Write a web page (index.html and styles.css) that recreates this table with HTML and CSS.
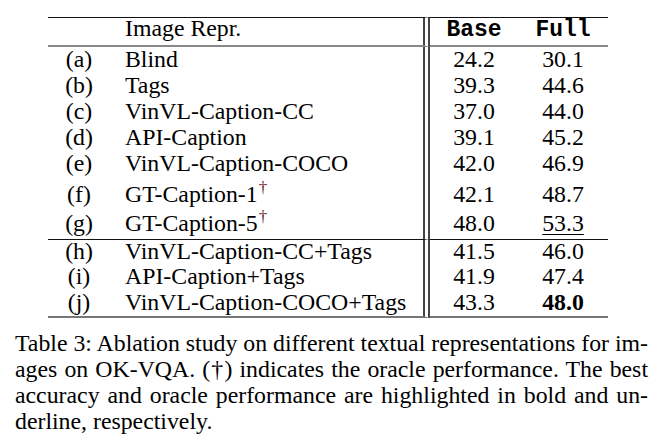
FILE: index.html
```html
<!DOCTYPE html>
<html>
<head>
<meta charset="utf-8">
<link rel="stylesheet" href="styles.css">
</head>
<body>
<div class="page">
  <table class="results">
    <colgroup>
      <col class="c-id"><col class="c-repr"><col class="c-base"><col class="c-full">
    </colgroup>
    <thead>
      <tr class="head">
        <th></th>
        <th class="repr">Image Repr.</th>
        <th class="num mono">Base</th>
        <th class="num mono">Full</th>
      </tr>
    </thead>
    <tbody>
      <tr><td class="id">(a)</td><td class="repr">Blind</td><td class="num">24.2</td><td class="num">30.1</td></tr>
      <tr><td class="id">(b)</td><td class="repr">Tags</td><td class="num">39.3</td><td class="num">44.6</td></tr>
      <tr><td class="id">(c)</td><td class="repr">VinVL-Caption-CC</td><td class="num">37.0</td><td class="num">44.0</td></tr>
      <tr><td class="id">(d)</td><td class="repr">API-Caption</td><td class="num">39.1</td><td class="num">45.2</td></tr>
      <tr><td class="id">(e)</td><td class="repr">VinVL-Caption-COCO</td><td class="num">42.0</td><td class="num">46.9</td></tr>
      <tr class="row-f"><td class="id">(f)</td><td class="repr">GT-Caption-1<sup class="dag">†</sup></td><td class="num">42.1</td><td class="num">48.7</td></tr>
      <tr class="row-g"><td class="id">(g)</td><td class="repr">GT-Caption-5<sup class="dag">†</sup></td><td class="num">48.0</td><td class="num"><span class="under">53.3</span></td></tr>
      <tr class="row-h"><td class="id">(h)</td><td class="repr">VinVL-Caption-CC+Tags</td><td class="num">41.5</td><td class="num">46.0</td></tr>
      <tr><td class="id">(i)</td><td class="repr">API-Caption+Tags</td><td class="num">41.9</td><td class="num">47.4</td></tr>
      <tr class="row-last"><td class="id">(j)</td><td class="repr">VinVL-Caption-COCO+Tags</td><td class="num">43.3</td><td class="num"><b>48.0</b></td></tr>
    </tbody>
  </table>
  <p class="caption">
    <span class="line">Table 3: Ablation study on different textual representations for im-</span>
    <span class="line">ages on OK-VQA. (†) indicates the oracle performance. The best</span>
    <span class="line">accuracy and oracle performance are highlighted in bold and un-</span>
    <span class="line last">derline, respectively.</span>
  </p>
</div>
</body>
</html>
```
FILE: styles.css
```css
html, body {
  margin: 0;
  padding: 0;
  background: #ffffff;
}
body {
  font-family: "Liberation Serif", "Times New Roman", serif;
  color: #000;
}
.page {
  padding-top: 17px;
}
.results {
  margin-left: 48px;
  width: 560px;
  border-collapse: separate;
  border-spacing: 0;
  table-layout: fixed;
  font-size: 23.8px;
}
.c-id { width: 62px; }
.c-repr { width: 320px; }
.c-base { width: 88px; }
.c-full { width: 90px; }

.results th,
.results td {
  padding: 0 0 2px 0;
  line-height: 24px;
  vertical-align: baseline;
  font-weight: normal;
  white-space: nowrap;
}
.results td.id { text-align: center; }
.results .repr {
  text-align: left;
  padding-left: 15px;
  border-right: 7px double #444;
}
.results .num { text-align: center; }
.results .mono {
  font-family: "Liberation Mono", "Courier New", monospace;
  font-weight: bold;
  font-size: 23px;
}

.head th {
  border-top: 1px solid #111;
  border-bottom: 2px solid #888;
  line-height: 20px;
  padding-bottom: 5px;
}
.row-f td {
  padding-top: 5px;
  padding-bottom: 1px;
}
.row-g td {
  padding-top: 4px;
  padding-bottom: 4px;
}
.row-h td {
  border-top: 1px solid #111;
  line-height: 22px;
}
.row-last td {
  border-bottom: 2px solid #777;
}
.dag {
  font-size: 17px;
  line-height: 0;
  vertical-align: 9px;
  color: #6b1a1a;
  margin-left: 1px;
}
.under {
  text-decoration: underline;
  text-decoration-thickness: 1px;
  text-underline-offset: 3px;
}
.results b { font-weight: bold; }

.caption {
  margin: 12px 12px 0 15px;
  font-size: 23.8px;
  line-height: 26px;
}
.caption .line {
  display: block;
  text-align: justify;
  text-align-last: justify;
  white-space: nowrap;
}
.caption .line.last {
  text-align: left;
  text-align-last: left;
}
```
